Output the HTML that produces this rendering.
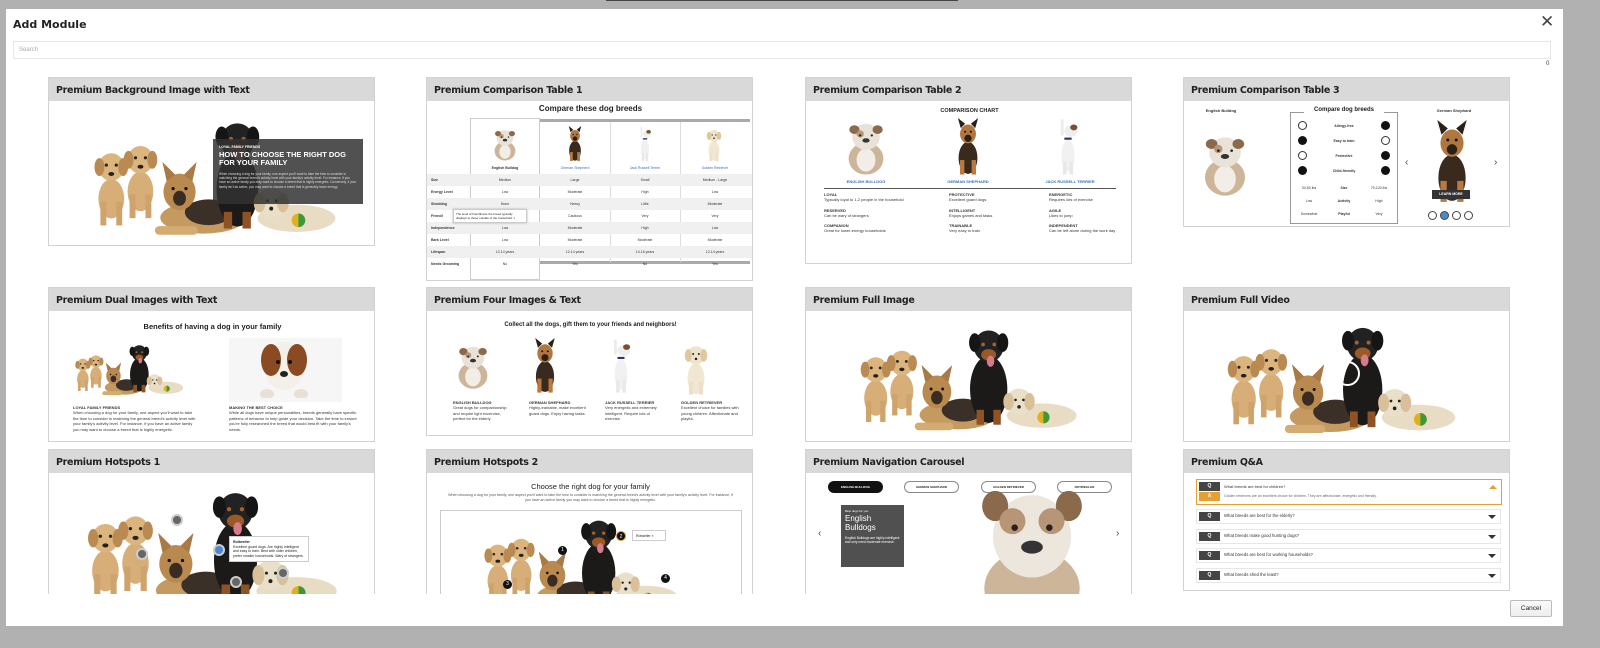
<!DOCTYPE html>
<html><head><meta charset="utf-8"><style>
*{box-sizing:border-box;margin:0;padding:0}
body{width:1600px;height:648px;background:#b1b1b1;font-family:"Liberation Sans",sans-serif;position:relative;overflow:hidden;color:#222}
.a{position:absolute}
.modal{left:6px;top:9px;width:1557px;height:617px;background:#fff}
.card{position:absolute;border:1px solid #d2d2d2;background:#fff;overflow:hidden}
.hd{height:23px;background:#d9d9d9;font-size:9.5px;font-weight:bold;padding:7px 7px;color:#222;font-family:"DejaVu Sans",sans-serif;letter-spacing:-0.3px}
.t{position:absolute;font-size:4px;color:#333;line-height:1.35}
.b{font-weight:bold}
.c{text-align:center}
svg{display:block}
</style></head><body>
<svg width="0" height="0" style="position:absolute">
<defs>
<symbol id="pup" viewBox="0 0 40 80"><ellipse cx="20" cy="52" rx="13" ry="20" fill="#d7ae78"/><rect x="9" y="55" width="6" height="24" fill="#cfa46c"/><rect x="25" y="55" width="6" height="24" fill="#cfa46c"/><ellipse cx="20" cy="20" rx="13" ry="14" fill="#dcb47e"/><ellipse cx="8" cy="20" rx="5" ry="9" fill="#b98a52"/><ellipse cx="32" cy="20" rx="5" ry="9" fill="#b98a52"/><circle cx="15" cy="18" r="1.6" fill="#222"/><circle cx="25" cy="18" r="1.6" fill="#222"/><ellipse cx="20" cy="27" rx="3" ry="2" fill="#222"/></symbol>
<symbol id="gsd" viewBox="0 0 90 70"><ellipse cx="50" cy="52" rx="40" ry="15" fill="#c49a60"/><ellipse cx="55" cy="47" rx="22" ry="12" fill="#3a3028"/><ellipse cx="28" cy="28" rx="15" ry="17" fill="#b88a50"/><polygon points="16,18 12,0 24,12" fill="#a97a45"/><polygon points="40,18 44,0 32,12" fill="#a97a45"/><ellipse cx="28" cy="34" rx="6" ry="7" fill="#3a2c22"/><circle cx="22" cy="25" r="1.5" fill="#111"/><circle cx="34" cy="25" r="1.5" fill="#111"/><rect x="5" y="60" width="40" height="8" rx="4" fill="#d4ab70"/></symbol>
<symbol id="rott" viewBox="0 0 50 110"><ellipse cx="25" cy="70" rx="20" ry="36" fill="#1c1a19"/><ellipse cx="25" cy="24" rx="16" ry="17" fill="#222"/><ellipse cx="10" cy="20" rx="6" ry="10" fill="#151515"/><ellipse cx="40" cy="20" rx="6" ry="10" fill="#151515"/><ellipse cx="25" cy="33" rx="8" ry="6" fill="#9a5a28"/><ellipse cx="27" cy="40" rx="4" ry="6" fill="#d77a8a"/><circle cx="19" cy="22" r="2" fill="#a0642e"/><circle cx="31" cy="22" r="2" fill="#a0642e"/><rect x="12" y="92" width="8" height="16" fill="#8e5224"/><rect x="30" y="92" width="8" height="16" fill="#8e5224"/></symbol>
<symbol id="gold" viewBox="0 0 90 60"><ellipse cx="48" cy="42" rx="40" ry="14" fill="#e8dcc4"/><ellipse cx="22" cy="26" rx="15" ry="15" fill="#eadfc8"/><ellipse cx="10" cy="26" rx="6" ry="10" fill="#d8c19a"/><ellipse cx="34" cy="26" rx="6" ry="10" fill="#d8c19a"/><circle cx="18" cy="24" r="1.5" fill="#222"/><circle cx="27" cy="24" r="1.5" fill="#222"/><circle cx="22" cy="32" r="2" fill="#222"/><circle cx="50" cy="44" r="7" fill="#e0b020"/><path d="M50 37a7 7 0 0 1 0 14z" fill="#3a9a3a"/></symbol>
<symbol id="pack" viewBox="0 0 240 120"><use href="#pup" x="0" y="30" width="38" height="78"/><use href="#pup" x="28" y="22" width="38" height="80"/><use href="#gsd" x="52" y="45" width="100" height="72"/><use href="#rott" x="115" y="0" width="50" height="112"/><use href="#gold" x="148" y="60" width="92" height="56"/></symbol>
<symbol id="bull" viewBox="0 0 60 80"><ellipse cx="30" cy="56" rx="24" ry="22" fill="#cdb59a"/><ellipse cx="30" cy="58" rx="13" ry="16" fill="#f2ede6"/><ellipse cx="30" cy="26" rx="19" ry="18" fill="#e9e2d8"/><ellipse cx="14" cy="16" rx="7" ry="6" fill="#8a6a4a"/><ellipse cx="46" cy="16" rx="7" ry="6" fill="#8a6a4a"/><ellipse cx="22" cy="22" rx="5" ry="5" fill="#b69676"/><circle cx="22" cy="24" r="1.6" fill="#222"/><circle cx="38" cy="24" r="1.6" fill="#222"/><ellipse cx="30" cy="31" rx="5" ry="3" fill="#333"/></symbol>
<symbol id="gsdp" viewBox="0 0 40 80"><ellipse cx="20" cy="55" rx="13" ry="22" fill="#3a2a1e"/><rect x="9" y="58" width="6" height="20" fill="#b87a40"/><rect x="25" y="58" width="6" height="20" fill="#b87a40"/><ellipse cx="20" cy="22" rx="11" ry="13" fill="#b07840"/><polygon points="10,14 6,0 16,8" fill="#2a2018"/><polygon points="30,14 34,0 24,8" fill="#2a2018"/><ellipse cx="20" cy="28" rx="5" ry="5" fill="#2b2018"/><circle cx="16" cy="19" r="1.4" fill="#111"/><circle cx="24" cy="19" r="1.4" fill="#111"/></symbol>
<symbol id="jrt" viewBox="0 0 40 80"><ellipse cx="20" cy="52" rx="9" ry="22" fill="#f1f1f1"/><rect x="13" y="60" width="5" height="18" fill="#e8e8e8"/><rect x="22" y="60" width="5" height="18" fill="#e8e8e8"/><rect x="10" y="2" width="4" height="22" fill="#ececec"/><ellipse cx="24" cy="18" rx="9" ry="8" fill="#eee"/><ellipse cx="28" cy="13" rx="5" ry="4" fill="#7a5030"/><rect x="15" y="27" width="10" height="3" fill="#335"/></symbol>
<symbol id="golp" viewBox="0 0 40 80"><ellipse cx="20" cy="55" rx="12" ry="22" fill="#f0e6d2"/><rect x="10" y="60" width="6" height="18" fill="#ece0c8"/><rect x="24" y="60" width="6" height="18" fill="#ece0c8"/><ellipse cx="20" cy="22" rx="12" ry="13" fill="#efe3cc"/><ellipse cx="9" cy="22" rx="5" ry="9" fill="#dfc79e"/><ellipse cx="31" cy="22" rx="5" ry="9" fill="#dfc79e"/><circle cx="16" cy="20" r="1.4" fill="#222"/><circle cx="24" cy="20" r="1.4" fill="#222"/><circle cx="20" cy="27" r="1.8" fill="#222"/></symbol>
</defs></svg>

<div class="a" style="left:606px;top:0;width:352px;height:3px;border-top:1px solid #444"></div>
<div class="a modal"></div>
<div class="a" style="left:13px;top:18px;font-size:11px;font-weight:bold;font-family:'DejaVu Sans',sans-serif">Add Module</div>
<div class="a" style="left:1540px;top:12px;font-size:17px;color:#444">✕</div>
<div class="a" style="left:13px;top:41px;width:1538px;height:18px;border:1px solid #e6e6e6;font-size:6px;color:#aaa;padding:5px 5px">Search</div>
<div class="a" style="left:1546px;top:61px;font-size:6px;color:#444">0</div>

<!-- Row 1 -->
<div class="card" style="left:48px;top:77px;width:327px;height:169px"><div class="hd">Premium Background Image with Text</div>
<svg class="a" style="left:40px;top:37px" width="255" height="125"><use href="#pack" width="255" height="125"/></svg>
<div class="a" style="left:164px;top:61px;width:150px;height:65px;background:rgba(50,50,50,.85);color:#fff;padding:6px">
<div style="font-size:3.5px;font-weight:bold">LOYAL FAMILY FRIENDS</div>
<div style="font-size:7.5px;font-weight:bold;line-height:1.1;margin-top:2px">HOW TO CHOOSE THE RIGHT DOG FOR YOUR FAMILY</div>
<div style="font-size:3.2px;line-height:1.4;margin-top:4px;color:#ddd">When choosing a dog for your family, one aspect you'll want to take the time to consider is matching the general breed's activity level with your family's activity level. For instance, if you have an active family you may want to choose a breed that is highly energetic. Conversely, if your family isn't as active, you may want to choose a breed that is generally lower energy.</div></div>
</div>

<div class="card" style="left:426px;top:77px;width:327px;height:204px"><div class="hd">Premium Comparison Table 1</div>
<div class="a b c" style="left:0;top:26px;width:327px;font-size:8px">Compare these dog breeds</div>
<div class="a" style="left:43px;top:40px;width:70px;height:162px;border:1px solid #ccc"></div>
<div class="a" style="left:113px;top:41px;width:210px;height:3px;background:#aaa"></div>
<div class="a" style="left:113px;top:183px;width:210px;height:3px;background:#aaa"></div>
<div class="a" style="left:183px;top:44px;width:1px;height:140px;background:#ddd"></div>
<div class="a" style="left:253px;top:44px;width:1px;height:140px;background:#ddd"></div>
<svg class="a" style="left:65px;top:48px" width="26" height="36"><use href="#bull" width="26" height="36"/></svg>
<svg class="a" style="left:137px;top:48px" width="22" height="36"><use href="#gsdp" width="22" height="36"/></svg>
<svg class="a" style="left:207px;top:48px" width="22" height="36"><use href="#jrt" width="22" height="36"/></svg>
<svg class="a" style="left:276px;top:48px" width="22" height="36"><use href="#golp" width="22" height="36"/></svg>
<div class="t b c" style="left:43px;top:88px;width:70px;font-size:3.5px">English Bulldog</div>
<div class="t c" style="left:113px;top:88px;width:70px;font-size:3.5px;color:#3a6fb5">German Shepherd</div>
<div class="t c" style="left:183px;top:88px;width:70px;font-size:3.5px;color:#3a6fb5">Jack Russell Terrier</div>
<div class="t c" style="left:253px;top:88px;width:70px;font-size:3.5px;color:#3a6fb5">Golden Retriever</div>
<div class="a" style="left:0;top:96px;width:327px;height:12px;background:#f0f0f0"></div>
<div class="a" style="left:0;top:120px;width:327px;height:12px;background:#f0f0f0"></div>
<div class="a" style="left:0;top:144px;width:327px;height:12px;background:#f0f0f0"></div>
<div class="a" style="left:0;top:168px;width:327px;height:12px;background:#f0f0f0"></div>
<div class="t b" style="left:4px;top:100px;font-size:3.5px;line-height:12px;margin-top:-4px">Size<br>Energy Level<br>Shedding<br>Friendl<br>Independence<br>Bark Level<br>Lifespan<br>Needs Grooming</div>
<div class="t c" style="left:43px;top:96px;width:70px;font-size:3.5px;line-height:12px">Medium<br>Low<br>None<br>&nbsp;<br>Low<br>Low<br>12-14 years<br>No</div>
<div class="t c" style="left:113px;top:96px;width:70px;font-size:3.5px;line-height:12px">Large<br>Moderate<br>Heavy<br>Cautious<br>Moderate<br>Moderate<br>12-14 years<br>Yes</div>
<div class="t c" style="left:183px;top:96px;width:70px;font-size:3.5px;line-height:12px">Small<br>High<br>Little<br>Very<br>High<br>Moderate<br>14-16 years<br>No</div>
<div class="t c" style="left:253px;top:96px;width:70px;font-size:3.5px;line-height:12px">Medium - Large<br>Low<br>Moderate<br>Very<br>Low<br>Moderate<br>12-14 years<br>Yes</div>
<div class="a" style="left:26px;top:131px;width:74px;height:14px;background:#fff;border:1px solid #ccc;font-size:3px;padding:2px;box-shadow:0 0 2px #aaa">The level of friendliness the breed typically displays to those outside of the household. ×</div>
</div>

<div class="card" style="left:805px;top:77px;width:327px;height:187px"><div class="hd">Premium Comparison Table 2</div>
<div class="a b c" style="left:0;top:30px;width:327px;font-size:5.5px">COMPARISON CHART</div>
<svg class="a" style="left:35px;top:40px" width="50" height="58"><use href="#bull" width="50" height="58"/></svg>
<svg class="a" style="left:143px;top:40px" width="38" height="58"><use href="#gsdp" width="38" height="58"/></svg>
<svg class="a" style="left:243px;top:40px" width="38" height="58"><use href="#jrt" width="38" height="58"/></svg>
<div class="t b c" style="left:20px;top:101px;width:80px;color:#3a6fb5">ENGLISH BULLDOG</div>
<div class="t b c" style="left:122px;top:101px;width:80px;color:#3a6fb5">GERMAN SHEPHARD</div>
<div class="t b c" style="left:224px;top:101px;width:80px;color:#3a6fb5">JACK RUSSELL TERRIER</div>
<div class="a" style="left:18px;top:110px;width:292px;height:1px;background:#555"></div>
<div class="t" style="left:18px;top:114px;line-height:1.3"><b>LOYAL</b><br>Typically loyal to 1-2 people in the household<br><br><b>RESERVED</b><br>Can be wary of strangers<br><br><b>COMPANION</b><br>Great for lower-energy households</div>
<div class="t" style="left:143px;top:114px;line-height:1.3"><b>PROTECTIVE</b><br>Excellent guard dogs<br><br><b>INTELLIGENT</b><br>Enjoys games and tasks<br><br><b>TRAINABLE</b><br>Very easy to train</div>
<div class="t" style="left:243px;top:114px;line-height:1.3"><b>ENERGETIC</b><br>Requires lots of exercise<br><br><b>AGILE</b><br>Likes to jump<br><br><b>INDEPENDENT</b><br>Can be left alone during the work day</div>
</div>

<div class="card" style="left:1183px;top:77px;width:327px;height:150px"><div class="hd">Premium Comparison Table 3</div>
<div class="t b c" style="left:12px;top:30px;width:50px">English Bulldog</div>
<svg class="a" style="left:16px;top:42px" width="50" height="88"><use href="#bull" width="50" height="88"/></svg>
<div class="a" style="left:106px;top:34px;width:108px;height:112px;border:1px solid #999"></div>
<div class="a b c" style="left:120px;top:29px;width:80px;font-size:6px;background:#fff">Compare dog breeds</div>
<div class="a" style="left:114px;top:43px;width:9px;height:9px;border-radius:50%;border:1px solid #333"></div>
<div class="a" style="left:114px;top:58px;width:9px;height:9px;border-radius:50%;background:#111"></div>
<div class="a" style="left:114px;top:73px;width:9px;height:9px;border-radius:50%;border:1px solid #333"></div>
<div class="a" style="left:114px;top:88px;width:9px;height:9px;border-radius:50%;background:#111"></div>
<div class="a" style="left:197px;top:43px;width:9px;height:9px;border-radius:50%;background:#111"></div>
<div class="a" style="left:197px;top:58px;width:9px;height:9px;border-radius:50%;border:1px solid #333"></div>
<div class="a" style="left:197px;top:73px;width:9px;height:9px;border-radius:50%;background:#111"></div>
<div class="a" style="left:197px;top:88px;width:9px;height:9px;border-radius:50%;background:#111"></div>
<div class="t b c" style="left:130px;top:41px;width:60px;line-height:15px;font-size:3.5px">Allergy-free<br>Easy to train<br>Protective<br>Child-friendly</div>
<div class="t c" style="left:110px;top:104px;font-size:3.5px;line-height:13px;width:100px"><span style="float:left;width:30px">30-50 lbs</span><b style="float:left;width:40px">Size</b><span style="float:left;width:30px">70-120 lbs</span><span style="float:left;width:30px">Low</span><b style="float:left;width:40px">Activity</b><span style="float:left;width:30px">High</span><span style="float:left;width:30px">Somewhat</span><b style="float:left;width:40px">Playful</b><span style="float:left;width:30px">Very</span></div>
<div class="a" style="left:221px;top:79px;font-size:10px;color:#444">‹</div>
<div class="a" style="left:310px;top:79px;font-size:10px;color:#444">›</div>
<div class="t b c" style="left:240px;top:30px;width:60px">German Shephard</div>
<svg class="a" style="left:246px;top:42px" width="44" height="84"><use href="#gsdp" width="44" height="84"/></svg>
<div class="a b" style="left:248px;top:112px;width:38px;height:9px;background:#333;color:#fff;font-size:3.5px;text-align:center;line-height:9px">LEARN MORE</div>
<div class="a" style="left:244px;top:133px;width:9px;height:9px;border-radius:50%;border:1px solid #444"></div>
<div class="a" style="left:256px;top:133px;width:9px;height:9px;border-radius:50%;background:#4a88d0;border:1px solid #444"></div>
<div class="a" style="left:268px;top:133px;width:9px;height:9px;border-radius:50%;border:1px solid #444"></div>
<div class="a" style="left:280px;top:133px;width:9px;height:9px;border-radius:50%;border:1px solid #444"></div>
</div>

<!-- Row 2 -->
<div class="card" style="left:48px;top:287px;width:327px;height:155px"><div class="hd">Premium Dual Images with Text</div>
<div class="a b c" style="left:0;top:34px;width:327px;font-size:7.5px">Benefits of having a dog in your family</div>
<svg class="a" style="left:25px;top:50px" width="112" height="63"><use href="#pack" width="112" height="63"/></svg>
<div class="a" style="left:180px;top:50px;width:113px;height:64px;background:#f6f6f6"></div>
<svg class="a" style="left:210px;top:50px" width="50" height="60" viewBox="0 0 50 60"><ellipse cx="25" cy="28" rx="20" ry="24" fill="#f3f0ea"/><ellipse cx="12" cy="22" rx="10" ry="16" fill="#8a4a22"/><ellipse cx="38" cy="22" rx="10" ry="16" fill="#8a4a22"/><circle cx="19" cy="24" r="2" fill="#111"/><circle cx="31" cy="24" r="2" fill="#111"/><ellipse cx="25" cy="36" rx="4" ry="3" fill="#222"/><ellipse cx="8" cy="56" rx="7" ry="5" fill="#e8e0d4"/><ellipse cx="42" cy="56" rx="7" ry="5" fill="#e8e0d4"/></svg>
<div class="t" style="left:24px;top:117px;width:125px"><b>LOYAL FAMILY FRIENDS</b><br>When choosing a dog for your family, one aspect you'll want to take the time to consider is matching the general breed's activity level with your family's activity level. For instance, if you have an active family you may want to choose a breed that is highly energetic.</div>
<div class="t" style="left:180px;top:117px;width:130px"><b>MAKING THE BEST CHOICE</b><br>While all dogs have unique personalities, breeds generally have specific patterns of behavior to help guide your decision. Take the time to ensure you're fully researched the breed that would best fit with your family's needs.</div>
</div>

<div class="card" style="left:426px;top:287px;width:327px;height:149px"><div class="hd">Premium Four Images &amp; Text</div>
<div class="a b c" style="left:0;top:34px;width:327px;font-size:6px">Collect all the dogs, gift them to your friends and neighbors!</div>
<svg class="a" style="left:28px;top:50px" width="36" height="56"><use href="#bull" width="36" height="56"/></svg>
<svg class="a" style="left:104px;top:50px" width="28" height="56"><use href="#gsdp" width="28" height="56"/></svg>
<svg class="a" style="left:180px;top:50px" width="28" height="56"><use href="#jrt" width="28" height="56"/></svg>
<svg class="a" style="left:254px;top:52px" width="30" height="56"><use href="#golp" width="30" height="56"/></svg>
<div class="t" style="left:26px;top:112px;width:58px"><b>ENGLISH BULLDOG</b><br>Great dogs for companionship and require light excercise, perfect for the elderly</div>
<div class="t" style="left:102px;top:112px;width:58px"><b>GERMAN SHEPHARD</b><br>Highly-trainable, make excellent guard dogs. Enjoy having tasks.</div>
<div class="t" style="left:178px;top:112px;width:58px"><b>JACK RUSSELL TERRIER</b><br>Very energetic and extremely intelligent. Require lots of exercise.</div>
<div class="t" style="left:254px;top:112px;width:58px"><b>GOLDEN RETRIEVER</b><br>Excellent choice for families with young children. Affectionate and playful.</div>
</div>

<div class="card" style="left:805px;top:287px;width:327px;height:155px"><div class="hd">Premium Full Image</div>
<svg class="a" style="left:52px;top:32px" width="224" height="118"><use href="#pack" width="224" height="118"/></svg></div>

<div class="card" style="left:1183px;top:287px;width:327px;height:155px"><div class="hd">Premium Full Video</div>
<svg class="a" style="left:40px;top:32px" width="238" height="118"><use href="#pack" width="238" height="118"/></svg>
<div class="a" style="left:151px;top:73px;width:25px;height:25px;border-radius:50%;border:2px solid #fff"></div></div>

<!-- Row 3 -->
<div class="card" style="left:48px;top:449px;width:327px;height:145px;border-bottom:0"><div class="hd">Premium Hotspots 1</div>
<svg class="a" style="left:36px;top:33px" width="258" height="132"><use href="#pack" width="258" height="132"/></svg>
<div class="a" style="left:87px;top:98px;width:12px;height:12px;border-radius:50%;background:#666;border:2px solid #ccc"></div>
<div class="a" style="left:122px;top:64px;width:12px;height:12px;border-radius:50%;background:#666;border:2px solid #ccc"></div>
<div class="a" style="left:164px;top:94px;width:12px;height:12px;border-radius:50%;background:#4a88d0;border:2px solid #ccc"></div>
<div class="a" style="left:181px;top:126px;width:12px;height:12px;border-radius:50%;background:#666;border:2px solid #ccc"></div>
<div class="a" style="left:228px;top:117px;width:12px;height:12px;border-radius:50%;background:#666;border:2px solid #ccc"></div>
<div class="a" style="left:180px;top:86px;width:80px;height:26px;background:#fff;border:1px solid #ccc;font-size:3.5px;padding:3px;line-height:1.3"><b>Rottweiler</b><br>Excellent guard dogs. Are highly intelligent and easy to train. Best with older children, prefer smaller households. Wary of strangers.</div>
</div>

<div class="card" style="left:426px;top:449px;width:327px;height:145px;border-bottom:0"><div class="hd">Premium Hotspots 2</div>
<div class="a c" style="left:0;top:32px;width:327px;font-size:7.5px">Choose the right dog for your family</div>
<div class="t c" style="left:20px;top:43px;width:287px;color:#555;font-size:3.6px">When choosing a dog for your family, one aspect you'll want to take the time to consider is matching the general breed's activity level with your family's activity level. For instance, if you have an active family you may want to choose a breed that is highly energetic.</div>
<div class="a" style="left:13px;top:60px;width:302px;height:90px;border:1px solid #ccc"></div>
<svg class="a" style="left:55px;top:64px" width="200" height="100"><use href="#pack" width="200" height="100"/></svg>
<div class="a" style="left:131px;top:96px;width:9px;height:9px;border-radius:50%;background:#111;color:#fff;font-size:5px;text-align:center;line-height:9px">1</div>
<div class="a" style="left:189px;top:81px;width:10px;height:10px;border-radius:50%;background:#111;color:#fff;font-size:5px;text-align:center;line-height:10px;border:1px solid #e08a20">2</div>
<div class="a" style="left:76px;top:130px;width:9px;height:9px;border-radius:50%;background:#111;color:#fff;font-size:5px;text-align:center;line-height:9px">3</div>
<div class="a" style="left:234px;top:124px;width:9px;height:9px;border-radius:50%;background:#111;color:#fff;font-size:5px;text-align:center;line-height:9px">4</div>
<div class="a" style="left:205px;top:80px;width:34px;height:11px;border:1px solid #ccc;background:#fff;font-size:3.5px;padding:3px">Rotweiler ×</div>
</div>

<div class="card" style="left:805px;top:449px;width:327px;height:145px;border-bottom:0"><div class="hd">Premium Navigation Carousel</div>
<div class="a b c" style="left:22px;top:31px;width:55px;height:12px;border-radius:6px;background:#111;color:#fff;font-size:3px;line-height:12px">ENGLISH BULLDOG</div>
<div class="a b c" style="left:98px;top:31px;width:55px;height:12px;border-radius:6px;border:1px solid #888;font-size:3px;line-height:10px">GERMAN SHEPHARD</div>
<div class="a b c" style="left:175px;top:31px;width:55px;height:12px;border-radius:6px;border:1px solid #888;font-size:3px;line-height:10px">GOLDEN RETRIEVER</div>
<div class="a b c" style="left:251px;top:31px;width:55px;height:12px;border-radius:6px;border:1px solid #888;font-size:3px;line-height:10px">ROTWEILLER</div>
<svg class="a" style="left:160px;top:30px" width="132" height="130" viewBox="0 0 60 60"><ellipse cx="30" cy="50" rx="22" ry="18" fill="#cdb59a"/><ellipse cx="30" cy="26" rx="18" ry="19" fill="#ede6dc"/><ellipse cx="13" cy="12" rx="6" ry="7" fill="#8a6a4a"/><ellipse cx="47" cy="12" rx="6" ry="7" fill="#8a6a4a"/><ellipse cx="21" cy="19" rx="6" ry="6" fill="#b69676"/><ellipse cx="39" cy="19" rx="6" ry="6" fill="#b69676"/><circle cx="22" cy="22" r="1.5" fill="#222"/><circle cx="38" cy="22" r="1.5" fill="#222"/><ellipse cx="30" cy="31" rx="5" ry="3" fill="#333"/></svg>
<div class="a" style="left:12px;top:78px;font-size:10px;color:#444">‹</div>
<div class="a" style="left:310px;top:78px;font-size:10px;color:#444">›</div>
<div class="a" style="left:35px;top:55px;width:63px;height:62px;background:#505050;color:#fff;padding:4px">
<div style="font-size:3px">Best dogs for you</div><div style="font-size:8px;line-height:1.1;margin-top:2px">English Bulldogs</div><div style="font-size:3.3px;line-height:1.4;margin-top:3px">English Bulldogs are highly intelligent and only need moderate exercise.</div></div>
</div>

<div class="card" style="left:1183px;top:449px;width:327px;height:142px"><div class="hd">Premium Q&amp;A</div>
<div class="a" style="left:12px;top:29px;width:306px;height:26px;border:1px solid #e6a030;background:#fff"></div>
<div class="a b c" style="left:15px;top:32px;width:21px;height:9px;background:#444;color:#fff;font-size:5px;line-height:9px">Q</div>
<div class="a b c" style="left:15px;top:42px;width:21px;height:9px;background:#e6a030;color:#fff;font-size:5px;line-height:9px">A</div>
<div class="t" style="left:40px;top:34px;font-size:4px">What breeds are best for children?</div>
<div class="t" style="left:40px;top:44px;font-size:3.5px;color:#666">Golden retrievers are an excellent choice for children. They are affectionate, energetic and friendly.</div>
<div class="a" style="left:305px;top:35px;width:0;height:0;border-left:4px solid transparent;border-right:4px solid transparent;border-bottom:4px solid #e6a030"></div>
</div>
<div id="qa"></div>
<script>
var q=["What breeds are best for the elderly?","What breeds make good hunting dogs?","What breeds are best for working households?","What breeds shed the least?"];
var h="";q.forEach(function(s,i){var y=509+i*19.5;
h+='<div class="a" style="left:1196px;top:'+y+'px;width:305px;height:15px;border:1px solid #e6e6e6"></div>'+
'<div class="a b c" style="left:1199px;top:'+(y+3)+'px;width:21px;height:9px;background:#444;color:#fff;font-size:5px;line-height:9px">Q</div>'+
'<div class="a" style="left:1224px;top:'+(y+4)+'px;font-size:4.3px;color:#333">'+s+'</div>'+
'<div class="a" style="left:1488px;top:'+(y+6)+'px;border-left:4px solid transparent;border-right:4px solid transparent;border-top:4px solid #333"></div>';});
document.getElementById("qa").outerHTML=h;
</script>

<div class="a" style="left:1510px;top:600px;width:42px;height:17px;border:1px solid #bbb;border-radius:2px;background:linear-gradient(#fafafa,#eee);font-size:6.5px;text-align:center;line-height:15px;color:#222">Cancel</div>
</body></html>
